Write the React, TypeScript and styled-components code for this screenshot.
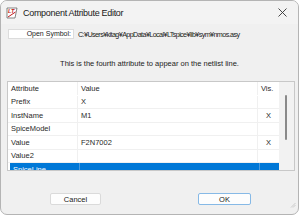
import React from "react";
import styled, { createGlobalStyle } from "styled-components";

const Global = createGlobalStyle`
  html, body { margin: 0; padding: 0; background: #ffffff; }
  body { width: 300px; height: 216px; overflow: hidden; font-family: "Liberation Sans", Arial, sans-serif; }
`;

const Window = styled.div`
  box-sizing: border-box;
  width: 299px;
  height: 215px;
  border: 1px solid #b4b4b4;
  border-radius: 7px;
  background: #f0f0f0;
  display: flex;
  flex-direction: column;
  overflow: hidden;
  position: relative;
`;

const TitleBar = styled.div`
  height: 23px;
  display: flex;
  align-items: center;
  padding-left: 5px;
  gap: 5px;
  background: #f3f3f3;
`;

const Title = styled.div`
  font-family: "Liberation Sans", Arial, sans-serif;
  font-size: 9px;
  letter-spacing: -0.3px;
  color: #1a1a1a;
  flex: 1;
`;

const CloseBox = styled.div`
  width: 20px;
  display: flex;
  justify-content: center;
  margin-right: 6px;
`;

const SymbolRow = styled.div`
  display: flex;
  align-items: center;
  margin-top: 5px;
  padding-left: 7px;
  gap: 4px;
  height: 10px;
`;

const SmallButton = styled.div`
  box-sizing: border-box;
  width: 66px;
  height: 10px;
  background: #ffffff;
  border: 1px solid #dcdcdc;
  font-size: 7px;
  color: #222;
  text-align: right;
  padding-right: 2px;
  line-height: 8px;
  white-space: nowrap;
`;

const PathText = styled.div`
  font-size: 7.2px;
  color: #222;
  letter-spacing: -0.6px;
  white-space: nowrap;
`;

const Note = styled.div`
  margin-top: 20px;
  height: 10px;
  text-align: center;
  font-size: 7.5px;
  color: #222;
  line-height: 10px;
`;

const Table = styled.div`
  box-sizing: border-box;
  margin: 12px 0 0 6px;
  width: 288px;
  height: 90px;
  border: 1px solid #c8c8c8;
  background: #ffffff;
  display: flex;
  overflow: hidden;
`;

const Grid = styled.div`
  width: 271px;
  display: flex;
  flex-direction: column;
`;

const Row = styled.div<{ $selected?: boolean; $header?: boolean }>`
  display: grid;
  grid-template-columns: 70px 180px 21px;
  height: ${(p) => (p.$header ? "13.5px" : "13.5px")};
  flex-shrink: 0;
  box-sizing: border-box;
  border-bottom: 1px solid ${(p) => (p.$header ? "#ffffff" : "#f0f0f0")};
  background: ${(p) => (p.$selected ? "#0078d7" : "#ffffff")};
  margin-left: ${(p) => (p.$selected ? "2px" : "0")};
`;

const Cell = styled.div<{ $center?: boolean; $last?: boolean; $selected?: boolean }>`
  font-size: 7.5px;
  color: ${(p) => (p.$selected ? "#ffffff" : "#2a2a2a")};
  display: flex;
  align-items: center;
  justify-content: ${(p) => (p.$center ? "center" : "flex-start")};
  padding-left: ${(p) => (p.$center ? "0" : "3px")};
  border-right: ${(p) => (p.$last ? "none" : `1px solid ${p.$selected ? "#4a9be0" : "#f0f0f0"}`)};
  white-space: nowrap;
  overflow: hidden;
`;

const ScrollTrack = styled.div`
  flex: 1;
  background: #f2f2f2;
  display: flex;
  justify-content: flex-start;
  padding-left: 6px;
  padding-top: 13px;
`;

const Thumb = styled.div`
  width: 2px;
  height: 45px;
  border-radius: 1px;
  background: #8a8a8a;
`;

const ButtonRow = styled.div`
  display: flex;
  margin-top: 22px;
  padding-left: 49px;
  gap: 97px;
`;

const DialogButton = styled.div<{ $default?: boolean }>`
  box-sizing: border-box;
  width: ${(p) => (p.$default ? "53px" : "51px")};
  height: 12px;
  background: #fdfdfd;
  border: 1px solid ${(p) => (p.$default ? "#86b9e6" : "#dadada")};
  border-radius: 2px;
  font-size: 7.5px;
  color: #222;
  display: flex;
  align-items: center;
  justify-content: center;
`;

const Grip = styled.div`
  position: absolute;
  right: 2px;
  bottom: 2px;
`;

const AppIcon = () => (
  <svg width="12" height="12" viewBox="0 0 12 12">
    <path d="M1 1 H11 L9 11 H1 Z" fill="#fff" stroke="#555" strokeWidth="0.7" />
    <text x="2" y="6" fontSize="5.5" fontWeight="bold" fontStyle="italic" fill="#c01818" fontFamily="Liberation Sans, sans-serif">LT</text>
    <path d="M2 10 L9.5 5" fill="none" stroke="#c01818" strokeWidth="1" />
  </svg>
);

const CloseIcon = () => (
  <svg width="9" height="9" viewBox="0 0 9 9">
    <path d="M0.5 0.5 L8.5 8.5 M8.5 0.5 L0.5 8.5" stroke="#333" strokeWidth="0.9" />
  </svg>
);

const rows = [
  { name: "Prefix", value: "X", vis: "" },
  { name: "InstName", value: "M1", vis: "X" },
  { name: "SpiceModel", value: "", vis: "" },
  { name: "Value", value: "F2N7002", vis: "X" },
  { name: "Value2", value: "", vis: "" },
];

export default function App() {
  return (
    <>
      <Global />
      <Window>
        <TitleBar>
          <AppIcon />
          <Title>Component Attribute Editor</Title>
          <CloseBox>
            <CloseIcon />
          </CloseBox>
        </TitleBar>
        <SymbolRow>
          <SmallButton>Open Symbol:</SmallButton>
          <PathText>C:¥Users¥kitag¥AppData¥Local¥LTspice¥lib¥sym¥nmos.asy</PathText>
        </SymbolRow>
        <Note>This is the fourth attribute to appear on the netlist line.</Note>
        <Table>
          <Grid>
            <Row $header>
              <Cell>Attribute</Cell>
              <Cell>Value</Cell>
              <Cell $last>Vis.</Cell>
            </Row>
            {rows.map((r) => (
              <Row key={r.name}>
                <Cell>{r.name}</Cell>
                <Cell>{r.value}</Cell>
                <Cell $center $last>{r.vis}</Cell>
              </Row>
            ))}
            <Row $selected>
              <Cell $selected>SpiceLine</Cell>
              <Cell $selected></Cell>
              <Cell $selected $last></Cell>
            </Row>
          </Grid>
          <ScrollTrack>
            <Thumb />
          </ScrollTrack>
        </Table>
        <ButtonRow>
          <DialogButton>Cancel</DialogButton>
          <DialogButton $default>OK</DialogButton>
        </ButtonRow>
        <Grip>
          <svg width="6" height="6" viewBox="0 0 6 6">
            <path d="M5.5 1 L1 5.5 M5.5 3 L3 5.5" stroke="#bbb" strokeWidth="0.7" />
          </svg>
        </Grip>
      </Window>
    </>
  );
}
